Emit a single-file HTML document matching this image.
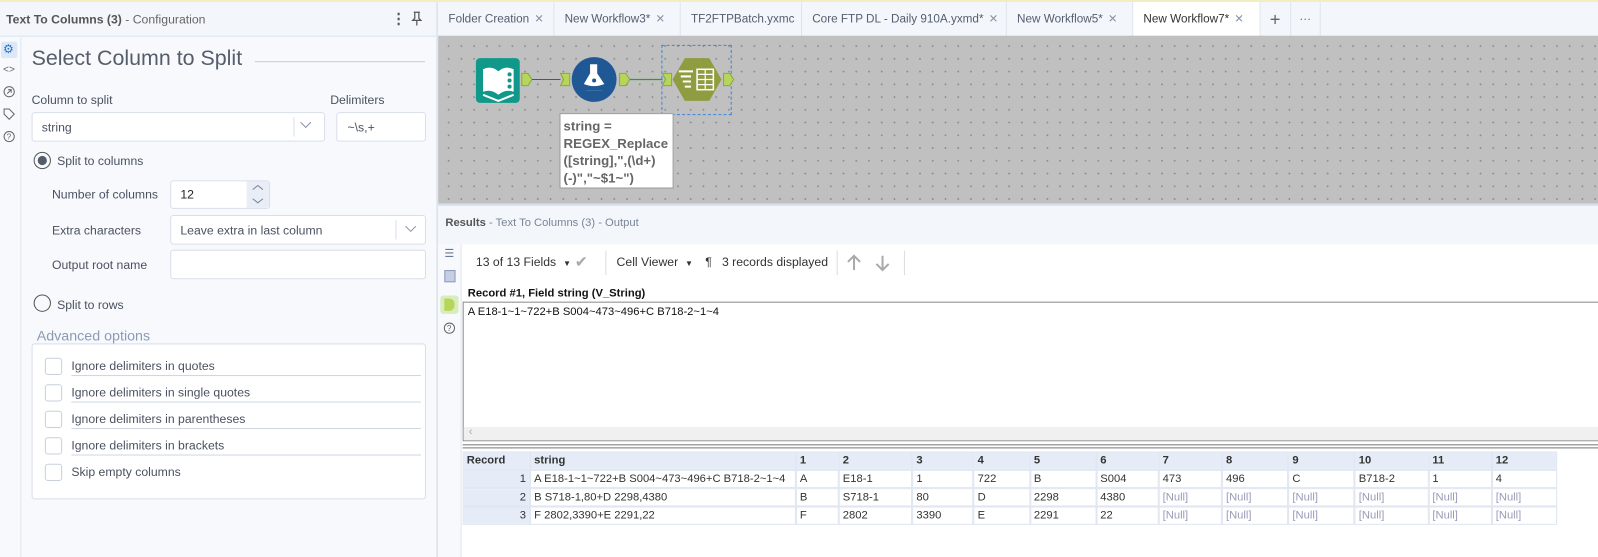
<!DOCTYPE html>
<html><head><meta charset="utf-8">
<style>
*{box-sizing:border-box;margin:0;padding:0}
body{width:1598px;height:547px;overflow:hidden;font-family:"Liberation Sans",sans-serif;background:#fff;position:relative;color:#333}
#w{position:absolute;left:0;top:0;width:1568px;height:537px;transform:scale(1.0191);transform-origin:0 0}
.a{position:absolute}
.t{font-size:12px;color:#4a5160;white-space:nowrap}
.inp{position:absolute;background:#fff;border:1px solid #d8dfea;border-radius:3px}
.cb{position:absolute;left:44px;width:17px;height:17px;border:1px solid #c9d0dc;border-radius:3px;background:#fff}
.cl{position:absolute;left:70px;width:343px;border-bottom:1px solid #cfd6e2;font-size:12px;color:#4a5160;height:17px}
.tab{position:absolute;top:1px;height:34px;border-right:1px solid #dfe5ef;font-size:11.5px;color:#555d6e;line-height:34px;padding-left:10px;white-space:nowrap;overflow:hidden}
.tab span{color:#8a93a3;margin-left:5px}
table{border-collapse:separate;border-spacing:2px;font-size:11px;font-family:"Liberation Sans",sans-serif;table-layout:fixed}
td{height:16px;padding:0 3px;white-space:nowrap;overflow:hidden;background:#fff;outline:1px solid #dfe6f2}
tr.h td{background:#e6ecf7;font-weight:bold}
td.r{background:#e6ecf7;text-align:right}
td.n{color:#9a9ab8}
</style></head><body><div id="w">
<div class="a" style="left:0;top:0;width:1598px;height:2px;background:#f3edc4"></div>
<div class="a" style="left:0;top:2px;width:428px;height:545px;background:#f7f9fd"></div>
<div class="a" style="left:0;top:2px;width:428px;height:34px;background:#f3f6fb;border-bottom:1px solid #dde3ee"></div>
<div class="a t" style="left:6px;top:12px;font-size:12px"><b style="color:#555">Text To Columns (3)</b> <span style="color:#666"> - Configuration</span></div>
<div class="a" style="left:384px;top:10px;font-size:14px;color:#555;font-weight:bold">⋮</div>
<svg class="a" style="left:403px;top:11px" width="12" height="14"><path d="M3 1h6M4 1v6l-2 2h8l-2-2V1M6 9v5" stroke="#555" fill="none" stroke-width="1.2"/></svg>
<div class="a" style="left:20px;top:37px;width:1px;height:510px;background:#dfe5ef"></div>
<div class="a" style="left:1px;top:41px;width:16px;height:16px;background:#dde8f7;border-radius:2px"></div>
<div class="a" style="left:3px;top:41px;font-size:12px;color:#2f6fc0">⚙</div>
<div class="a" style="left:3px;top:63px;font-size:10px;color:#666">&lt;&gt;</div>
<svg class="a" style="left:3px;top:84px" width="12" height="12"><circle cx="6" cy="6" r="5" stroke="#666" fill="none"/><path d="M4 8l4-4M5 4h3v3" stroke="#666" fill="none"/></svg>
<svg class="a" style="left:3px;top:106px" width="12" height="12"><path d="M1 1h5l5 5-5 5-5-5z" stroke="#666" fill="none"/></svg>
<svg class="a" style="left:3px;top:128px" width="12" height="12"><circle cx="6" cy="6" r="5" stroke="#666" fill="none"/><text x="3.5" y="9" font-size="8" fill="#666">?</text></svg>
<div class="a" style="left:31px;top:46px;font-size:21px;color:#555d6a">Select Column to Split</div>
<div class="a" style="left:250px;top:60px;width:167px;height:1px;background:#c7ccd4"></div>
<div class="a t" style="left:31px;top:91px">Column to split</div>
<div class="a t" style="left:324px;top:91px">Delimiters</div>
<div class="inp" style="left:31px;top:110px;width:288px;height:29px"></div>
<div class="a t" style="left:41px;top:118px">string</div>
<div class="a" style="left:288px;top:115px;width:1px;height:19px;background:#d8dfea"></div>
<svg class="a" style="left:294px;top:119px" width="12" height="8"><path d="M1 1l5 5 5-5" stroke="#8a93a3" fill="none"/></svg>
<div class="inp" style="left:330px;top:110px;width:88px;height:29px"></div>
<div class="a t" style="left:341px;top:118px">~\s,+</div>
<div class="a" style="left:33px;top:149px;width:17px;height:17px;border:1.5px solid #555;border-radius:50%"></div>
<div class="a" style="left:37px;top:153px;width:9px;height:9px;background:#555d6a;border-radius:50%"></div>
<div class="a t" style="left:56px;top:151px">Split to columns</div>
<div class="a t" style="left:51px;top:184px">Number of columns</div>
<div class="inp" style="left:167px;top:177px;width:98px;height:28px"></div>
<div class="a t" style="left:177px;top:184px;color:#222">12</div>
<div class="a" style="left:242px;top:178px;width:22px;height:26px;background:#e9eef6"></div>
<svg class="a" style="left:246px;top:180px" width="14" height="22"><path d="M2 6l5-4 5 4M2 15l5 4 5-4" stroke="#7c8597" fill="none"/></svg>
<div class="a t" style="left:51px;top:219px">Extra characters</div>
<div class="inp" style="left:167px;top:211px;width:251px;height:29px"></div>
<div class="a t" style="left:177px;top:219px">Leave extra in last column</div>
<div class="a" style="left:388px;top:216px;width:1px;height:19px;background:#d8dfea"></div>
<svg class="a" style="left:397px;top:221px" width="12" height="8"><path d="M1 1l5 5 5-5" stroke="#8a93a3" fill="none"/></svg>
<div class="a t" style="left:51px;top:253px">Output root name</div>
<div class="inp" style="left:167px;top:245px;width:251px;height:29px"></div>
<div class="a" style="left:33px;top:289px;width:17px;height:17px;border:1.5px solid #555;border-radius:50%"></div>
<div class="a t" style="left:56px;top:292px">Split to rows</div>
<div class="a" style="left:36px;top:321px;font-size:14px;color:#8c9ab3">Advanced options</div>
<div class="inp" style="left:31px;top:337px;width:387px;height:153px"></div>
<div class="cb" style="top:351px"></div><div class="cl" style="top:352px">Ignore delimiters in quotes</div>
<div class="cb" style="top:377px"></div><div class="cl" style="top:378px">Ignore delimiters in single quotes</div>
<div class="cb" style="top:403px"></div><div class="cl" style="top:404px">Ignore delimiters in parentheses</div>
<div class="cb" style="top:429px"></div><div class="cl" style="top:430px">Ignore delimiters in brackets</div>
<div class="cb" style="top:455px"></div><div class="cl" style="top:456px;border:none">Skip empty columns</div>
<div class="a" style="left:428px;top:2px;width:2px;height:545px;background:#dfe5ef"></div>
<div class="a" style="left:430px;top:2px;width:1168px;height:33px;background:#f3f6fb"></div>
<div class="tab" style="left:430px;width:114px;top:2px">Folder Creation<span>✕</span></div>
<div class="tab" style="left:544px;width:124px;top:2px">New Workflow3*<span>✕</span></div>
<div class="tab" style="left:668px;width:119px;top:2px">TF2FTPBatch.yxmc<span>✕</span></div>
<div class="tab" style="left:787px;width:201px;top:2px">Core FTP DL - Daily 910A.yxmd*<span>✕</span></div>
<div class="tab" style="left:988px;width:124px;top:2px">New Workflow5*<span>✕</span></div>
<div class="tab" style="left:1112px;width:125px;top:2px;background:#fff;color:#333">New Workflow7*<span>✕</span></div>
<div class="tab" style="left:1237px;width:30px;top:2px;font-size:18px;color:#666;padding-left:9px">+</div>
<div class="tab" style="left:1267px;width:29px;top:2px;color:#666;padding-left:8px">···</div>
<div class="a" style="left:430px;top:35px;width:1168px;height:165px;background-color:#c0c0c0;background-image:radial-gradient(circle,#8f8f8f 0.8px,transparent 1px);background-size:12.5px 12.5px;background-position:4px 4px"></div>
<div class="a" style="left:649px;top:44px;width:69px;height:69px;border:1px dashed #3a86d8"></div>
<svg class="a" style="left:430px;top:35px" width="320" height="165">
<rect x="37" y="22" width="43" height="44" rx="4" fill="#10998a"/>
<path d="M44 33q8-4 15 2q7-6 15-2v22q-8-3-15 3q-7-6-15-3z" fill="#fff"/>
<path d="M44 58l15 6 15-6" stroke="#fff" stroke-width="2" fill="none"/>
<circle cx="70" cy="38" r="2" fill="#10998a"/><circle cx="70" cy="44" r="2" fill="#10998a"/><circle cx="70" cy="50" r="2" fill="#10998a"/>
<path d="M82 37h6l4 6-4 6h-6z" fill="#b6d55a" stroke="#8aa83a"/>
<path d="M92 43h28" stroke="#555" stroke-width="1"/>
<path d="M120 37h9v12h-9l3-6z" fill="#b6d55a" stroke="#8aa83a"/>
<circle cx="153" cy="43" r="22" fill="#1f5894"/>
<path d="M149 28h7v9l8 12q2 5-4 5h-14q-6 0-4-5l7-12z" fill="#fff"/>
<path d="M142 47q11 5 22 0l2 5q-1 2-4 2h-18q-3 0-3-2z" fill="#1f5894"/>
<circle cx="153" cy="44" r="2" fill="#1f5894"/>
<path d="M178 37h6l4 6-4 6h-6z" fill="#b6d55a" stroke="#8aa83a"/>
<path d="M188 43h32" stroke="#2a9a3a" stroke-width="1.2"/>
<path d="M220 37h9v12h-9l3-6z" fill="#b6d55a" stroke="#8aa83a"/>
<path d="M242 22h24l12 21-12 21h-24l-12-21z" fill="#8f9d40"/>
<path d="M236 35h14M238 40h10M240 45h8M242 50h6" stroke="#fff" stroke-width="2"/>
<rect x="254" y="33" width="16" height="20" fill="none" stroke="#fff" stroke-width="1.5"/>
<path d="M254 38h16M254 43h16M254 48h16M262 33v20" stroke="#fff" stroke-width="1.2"/>
<path d="M280 37h6l4 6-4 6h-6z" fill="#b6d55a" stroke="#8aa83a"/>
</svg>
<div class="a" style="left:549px;top:111px;width:112px;height:74px;background:#fff;border:1px solid #999;padding:3px 3px;font-weight:bold;font-size:13px;line-height:17px;color:#666">string =<br>REGEX_Replace<br>([string],",(\d+)<br>(-)","~$1~")</div>
<div class="a" style="left:430px;top:200px;width:1168px;height:40px;background:#f3f6fb;border-top:2px solid #d7dfeb"></div>
<div class="a" style="left:437px;top:213px;font-size:11px;color:#666"><b style="color:#555">Results</b> <span style="color:#7a8599">- Text To Columns (3) - Output</span></div>
<div class="a" style="left:430px;top:240px;width:23px;height:307px;background:#f7f9fd;border-right:1px solid #e2e7f0"></div>
<div class="a" style="left:436px;top:242px;font-size:11px;color:#6a7a99">☰</div>
<div class="a" style="left:436px;top:265px;width:11px;height:12px;background:#c5cfe3;border:1px solid #8a9ac0"></div>
<div class="a" style="left:432px;top:290px;width:18px;height:18px;background:#d9ecbc;border-radius:3px"></div>
<div class="a" style="left:436px;top:293px;width:10px;height:12px;background:#b6d55a;border-radius:0 5px 5px 0"></div>
<svg class="a" style="left:435px;top:316px" width="12" height="12"><circle cx="6" cy="6" r="5" stroke="#666" fill="none"/><text x="3.5" y="9" font-size="8" fill="#666">?</text></svg>
<div class="a" style="left:454px;top:240px;width:1144px;height:40px;background:#fff"></div>
<div class="a" style="left:467px;top:250px;font-size:12px;color:#333">13 of 13 Fields &nbsp;<span style="font-size:8px">▼</span></div>
<div class="a" style="left:564px;top:248px;font-size:15px;color:#aaa">✔</div>
<div class="a" style="left:594px;top:246px;width:1px;height:24px;background:#ddd"></div>
<div class="a" style="left:605px;top:250px;font-size:12px;color:#333">Cell Viewer &nbsp;<span style="font-size:8px">▼</span></div>
<div class="a" style="left:692px;top:250px;font-size:12px;color:#333">¶ &nbsp; 3 records displayed</div>
<div class="a" style="left:821px;top:246px;width:1px;height:24px;background:#ddd"></div>
<svg class="a" style="left:830px;top:248px" width="50" height="20"><rect width="50" height="20" fill="#fff"/><path d="M8 17V3M2 9l6-6 6 6M36 3v14M30 11l6 6 6-6" stroke="#aaa" stroke-width="2" fill="none"/></svg>
<div class="a" style="left:887px;top:246px;width:1px;height:24px;background:#ddd"></div>
<div class="a" style="left:459px;top:282px;font-size:11px;font-weight:bold;color:#111">Record #1, Field string (V_String)</div>
<div class="a" style="left:454px;top:296px;width:1144px;height:137px;border:1px solid #8a8a8a;background:#fff"></div>
<div class="a" style="left:459px;top:300px;font-size:11px;color:#111">A E18-1~1~722+B S004~473~496+C B718-2~1~4</div>
<div class="a" style="left:455px;top:419px;width:1143px;height:13px;background:#f0f0f0"></div>
<div class="a" style="left:460px;top:418px;font-size:11px;color:#aaa">‹</div>
<div class="a" style="left:454px;top:436px;width:1144px;height:1px;background:#777"></div>
<div class="a" style="left:454px;top:439px;width:1144px;height:1px;background:#777"></div>
<table class="a" style="left:453px;top:442px;width:1076px">
<colgroup><col style="width:64px"><col style="width:258px"><col style="width:40px"><col style="width:70px"><col style="width:58px"><col style="width:53px"><col style="width:63px"><col style="width:59px"><col style="width:60px"><col style="width:63px"><col style="width:63px"><col style="width:70px"><col style="width:60px"><col style="width:62px"></colgroup>
<tr class="h"><td>Record</td><td>string</td><td>1</td><td>2</td><td>3</td><td>4</td><td>5</td><td>6</td><td>7</td><td>8</td><td>9</td><td>10</td><td>11</td><td>12</td></tr>
<tr><td class="r">1</td><td>A E18-1~1~722+B S004~473~496+C B718-2~1~4</td><td>A</td><td>E18-1</td><td>1</td><td>722</td><td>B</td><td>S004</td><td>473</td><td>496</td><td>C</td><td>B718-2</td><td>1</td><td>4</td></tr>
<tr><td class="r">2</td><td>B S718-1,80+D 2298,4380</td><td>B</td><td>S718-1</td><td>80</td><td>D</td><td>2298</td><td>4380</td><td class="n">[Null]</td><td class="n">[Null]</td><td class="n">[Null]</td><td class="n">[Null]</td><td class="n">[Null]</td><td class="n">[Null]</td></tr>
<tr><td class="r">3</td><td>F 2802,3390+E 2291,22</td><td>F</td><td>2802</td><td>3390</td><td>E</td><td>2291</td><td>22</td><td class="n">[Null]</td><td class="n">[Null]</td><td class="n">[Null]</td><td class="n">[Null]</td><td class="n">[Null]</td><td class="n">[Null]</td></tr>
</table>
</div></body></html>
